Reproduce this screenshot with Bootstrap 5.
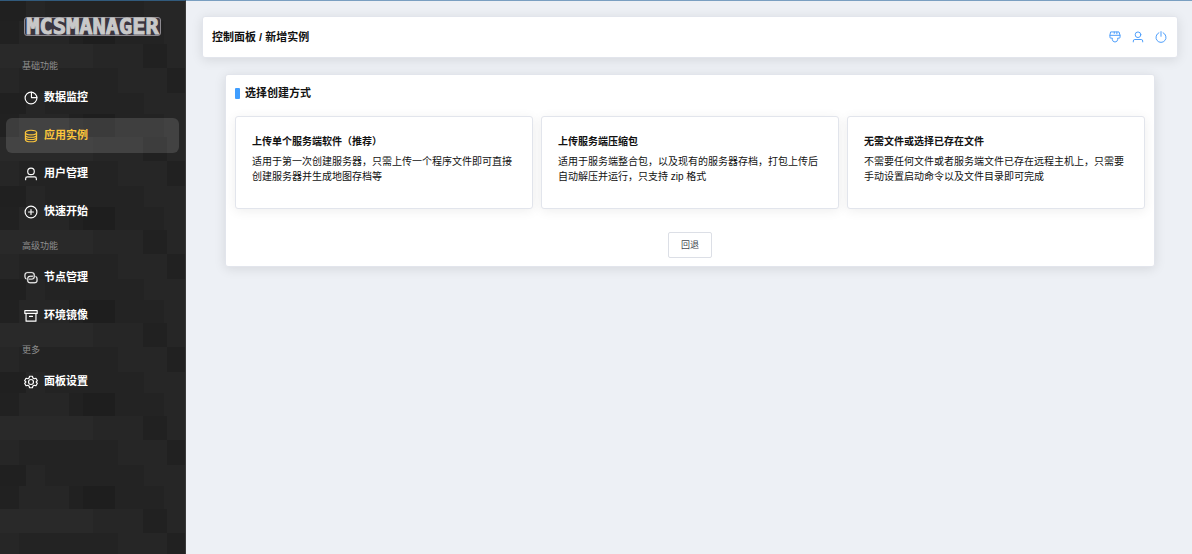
<!DOCTYPE html>
<html lang="zh-CN">
<head>
<meta charset="utf-8">
<meta name="viewport" content="width=device-width, initial-scale=1">
<title>MCSManager - 新增实例</title>
<link href="https://cdn.jsdelivr.net/npm/bootstrap@5.3.0/dist/css/bootstrap.min.css" rel="stylesheet">
<style>
  body {
    font-family: "Liberation Sans", "Noto Sans CJK SC", sans-serif;
    font-size: 10px;
    line-height: 15px;
    color: #111;
    background: #edf0f5;
  }
  .icon {
    width: 14px;
    height: 14px;
    flex: none;
    fill: none;
    stroke: currentColor;
    stroke-width: 84;
    stroke-linecap: round;
    stroke-linejoin: round;
  }
  .icon .solid { fill: currentColor; stroke-width: 16; }

  /* Sidebar: dark blocks repeated down the column */
  .side-panel {
    width: 186px;
    border-top: 1px solid #315a7c;
    border-right: 1px solid #3a3a3a;
    background: #232323 0 20px / 186px 93px url("data:image/svg+xml,%3Csvg xmlns='http://www.w3.org/2000/svg' viewBox='0 0 186 93' shape-rendering='crispEdges'%3E%3Cg fill='%23212121'%3E%3Cpath d='M0 0h19v23H0zM69 0h14v23H69zM167 47h19v25h-19zM143 23h24v24h-24z'/%3E%3C/g%3E%3Cg fill='%23262626'%3E%3Cpath d='M19 0h50v23H19zM164 0h22v23h-22zM93 23h50v24H93zM167 23h19v24h-19zM0 47h19v25H0zM118 47h49v25h-49zM26 72h19v21H26zM144 72h42v21h-42z'/%3E%3C/g%3E%3Cpath fill='%231e1e1e' d='M83 0h32v23H83z'/%3E%3Cpath fill='%23292929' d='M0 23h93v24H0z'/%3E%3Cpath fill='%23202020' d='M0 72h26v21H0z'/%3E%3C/svg%3E");
  }
  .brand { height: 51px; }
  .brand span {
    padding: 0 1px;
    border: 1px solid #8d8a90;
    border-radius: 3px;
    font: bold 22px/17px "DejaVu Sans Mono", monospace;
    color: #c9c9c9;
    background: #3b3640;
    -webkit-text-stroke: 1px #c9c9c9;
  }
  .side-nav { padding: 0 6px; }
  .side-label {
    height: 28px;
    padding-left: 16px;
    font-size: 9px;
    line-height: 28px;
    color: #8f8f8f;
  }
  .side-panel .nav-link {
    gap: 6px;
    height: 35px;
    margin-bottom: 3px;
    padding: 0 18px;
    border-radius: 6px;
    font-size: 11px;
    font-weight: 700;
    color: #fff;
  }
  .side-panel .nav-link.active { color: #fbc53c; background: rgba(255, 255, 255, .13); }

  .content {
    border-top: 1px solid #7a9fc1;
    padding: 15px 14px 16px 16px;
  }
  .panel {
    border: 1px solid #e2e5ec;
    border-radius: 3px;
    background: #fff;
    box-shadow: 0 2px 12px rgba(0, 0, 0, .1);
  }
  .top-bar { height: 42px; padding: 0 10px 0 9px; }
  .page-title { font-size: 11px; line-height: 16px; font-weight: 700; }
  .tools { gap: 11px; }
  .tool { color: #4c9dfb; line-height: 0; }
  .tool .icon { width: 12px; height: 12px; }
  .create-panel { margin: 16px 23px 0; padding: 10px 9px 8px; }
  .create-head { gap: 5px; }
  .marker { width: 5px; height: 11px; border-radius: 1px; background: #409eff; }
  .choices { margin: 15px 0 23px; gap: 8px; }
  .choice {
    flex: 1 1 0;
    min-height: 93px;
    padding: 17px 15px 16px 16px;
    box-shadow: 0 2px 12px rgba(0, 0, 0, .07);
  }
  .choice h3 { margin: 0 0 4px; font-size: 10px; line-height: 16px; font-weight: 700; }
  .back-btn {
    padding: 4px 12px;
    border: 1px solid #dcdfe6;
    border-radius: 2px;
    font-size: 9px;
    line-height: 16px;
    color: #444950;
    background: #fff;
  }
</style>
</head>
<body>
<div class="d-flex min-vh-100">
  <aside class="side-panel flex-shrink-0">
    <div class="brand d-flex align-items-center justify-content-center"><span>MCSMANAGER</span></div>
    <nav class="side-nav nav flex-column flex-nowrap" aria-label="主导航">
      <div class="side-label">基础功能</div>
      <a class="nav-link d-flex align-items-center" href="#">
        <svg class="icon" viewBox="0 0 1024 1024"><circle cx="512" cy="512" r="432"/><path d="M544 80v400h400"/></svg>数据监控</a>
      <a class="nav-link active d-flex align-items-center" href="#" aria-current="page">
        <svg class="icon" viewBox="0 0 1024 1024"><ellipse cx="512" cy="260" rx="410" ry="170"/><path d="M102 260v500c0 94 184 170 410 170s410-76 410-170V260M102 430c0 94 184 170 410 170s410-76 410-170M102 600c0 94 184 170 410 170s410-76 410-170"/></svg>应用实例</a>
      <a class="nav-link d-flex align-items-center" href="#">
        <svg class="icon" viewBox="0 0 1024 1024"><circle cx="512" cy="320" r="240"/><path d="M120 930v-76a128 128 0 0 1 128-128h528a128 128 0 0 1 128 128v76"/></svg>用户管理</a>
      <a class="nav-link d-flex align-items-center" href="#">
        <svg class="icon" viewBox="0 0 1024 1024"><circle cx="512" cy="512" r="432"/><path d="M332 512h360M512 332v360"/></svg>快速开始</a>
      <div class="side-label">高级功能</div>
      <a class="nav-link d-flex align-items-center" href="#">
        <svg class="icon" viewBox="30 50 964 964"><path class="solid" d="M640 384v64H448a128 128 0 0 0-128 128v128a128 128 0 0 0 128 128h320a128 128 0 0 0 128-128V576a128 128 0 0 0-64-110.848V394.88c74.56 26.368 128 97.472 128 181.056v128a192 192 0 0 1-192 192H448a192 192 0 0 1-192-192V576a192 192 0 0 1 192-192h192z"/><path class="solid" d="M384 640v-64h192a128 128 0 0 0 128-128V320a128 128 0 0 0-128-128H256a128 128 0 0 0-128 128v128a128 128 0 0 0 64 110.848v70.272A192.064 192.064 0 0 1 64 448V320a192 192 0 0 1 192-192h320a192 192 0 0 1 192 192v128a192 192 0 0 1-192 192H384z"/></svg>节点管理</a>
      <a class="nav-link d-flex align-items-center" href="#">
        <svg class="icon" viewBox="0 0 1024 1024"><path d="M60 120h904v200H60zM150 320v570h724V320M400 540h224"/></svg>环境镜像</a>
      <div class="side-label">更多</div>
      <a class="nav-link d-flex align-items-center" href="#">
        <svg class="icon" viewBox="0 0 1024 1024"><path d="M410 90h204l40 130 90 52 132-30 102 176-92 94 92 94-102 176-132-30-90 52-40 130H410l-40-130-90-52-132 30L46 606l92-94-92-94 102-176 132 30 90-52z"/><circle cx="512" cy="512" r="180"/></svg>面板设置</a>
    </nav>
  </aside>

  <main class="content flex-grow-1">
    <header class="panel top-bar d-flex align-items-center justify-content-between">
      <h1 class="page-title m-0">控制面板 / 新增实例</h1>
      <div class="tools d-flex">
        <a class="tool" href="#" aria-label="主题"><svg class="icon" viewBox="0 0 1024 1024"><path d="M170 80h684l90 290v150a80 80 0 0 1-80 90H740v130q-20 180-228 200Q304 920 284 740V610H160a80 80 0 0 1-80-90V370zM90 370h844M450 90v110M670 90v150"/></svg></a>
        <a class="tool" href="#" aria-label="用户"><svg class="icon" viewBox="0 0 1024 1024"><circle cx="512" cy="320" r="240"/><path d="M110 930v-76a128 128 0 0 1 128-128h548a128 128 0 0 1 128 128v76"/></svg></a>
        <a class="tool" href="#" aria-label="退出"><svg class="icon" viewBox="0 0 1024 1024"><path d="M330 150a430 430 0 1 0 364 0M512 50v400"/></svg></a>
      </div>
    </header>

    <section class="panel create-panel">
      <div class="create-head d-flex align-items-center">
        <span class="marker"></span>
        <h2 class="page-title m-0">选择创建方式</h2>
      </div>
      <div class="choices d-flex">
        <article class="panel choice">
          <h3>上传单个服务端软件（推荐）</h3>
          <p class="m-0">适用于第一次创建服务器，只需上传一个程序文件即可直接创建服务器并生成地图存档等</p>
        </article>
        <article class="panel choice">
          <h3>上传服务端压缩包</h3>
          <p class="m-0">适用于服务端整合包，以及现有的服务器存档，打包上传后自动解压并运行，只支持 zip 格式</p>
        </article>
        <article class="panel choice">
          <h3>无需文件或选择已存在文件</h3>
          <p class="m-0">不需要任何文件或者服务端文件已存在远程主机上，只需要手动设置启动命令以及文件目录即可完成</p>
        </article>
      </div>
      <div class="d-flex justify-content-center">
        <button type="button" class="btn back-btn">回退</button>
      </div>
    </section>
  </main>
</div>
<script src="https://cdn.jsdelivr.net/npm/bootstrap@5.3.0/dist/js/bootstrap.bundle.min.js"></script>
</body>
</html>
